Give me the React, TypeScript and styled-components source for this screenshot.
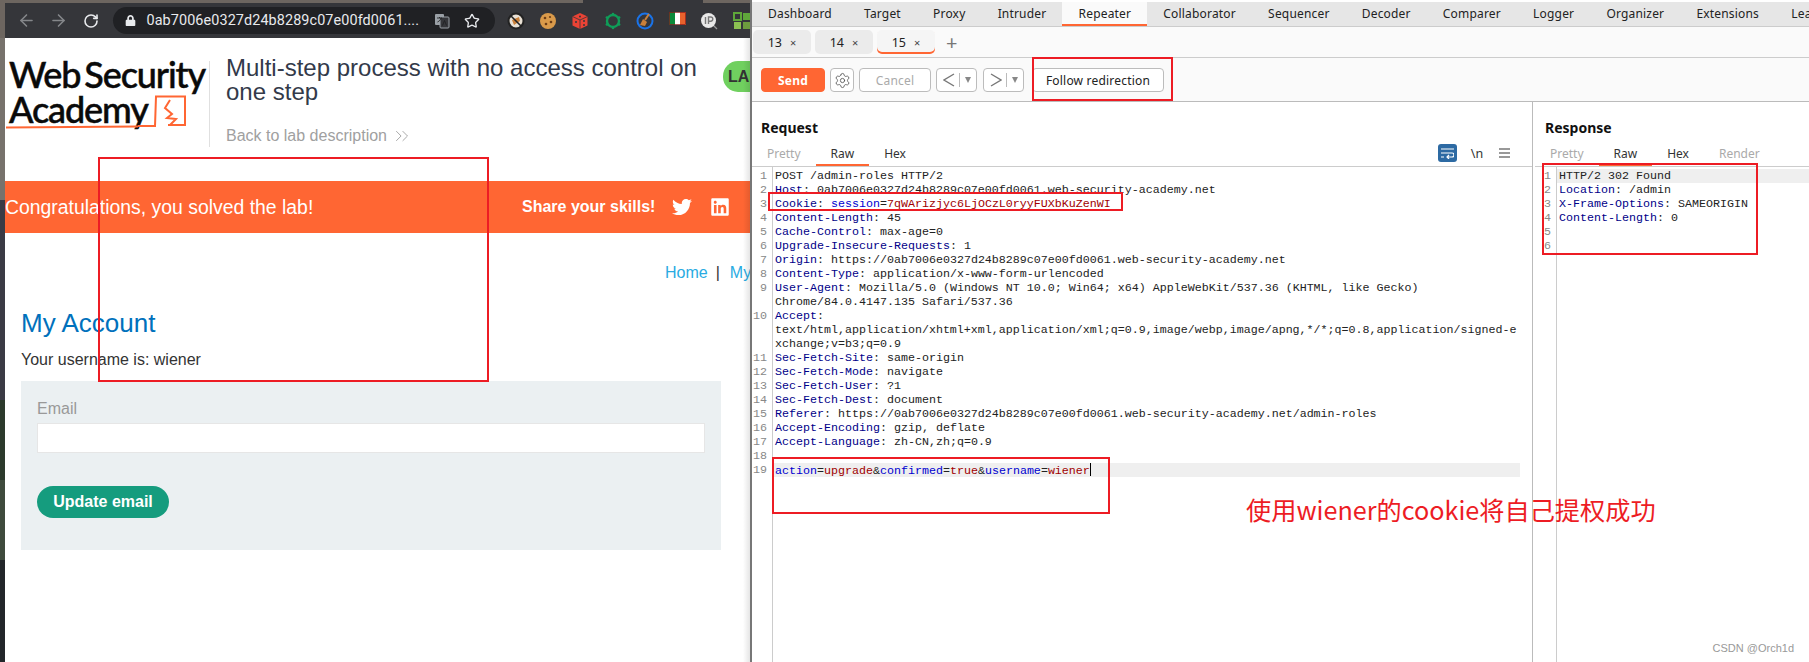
import React from 'react';
import styled, { createGlobalStyle } from 'styled-components';
import { ArrowLeft, ArrowRight, RotateCw, Star, Settings, ChevronsRight } from 'lucide-react';
import { FaTwitter, FaLinkedin, FaLock } from 'react-icons/fa';

const Global = createGlobalStyle`
  html, body { margin: 0; padding: 0; background: #fff; }
  body { font-family: "Liberation Sans", Arial, sans-serif; }
  * { box-sizing: border-box; }
`;

const Screen = styled.div`
  position: relative;
  width: 1809px;
  height: 662px;
  display: flex;
  overflow: hidden;
  background: #fff;
`;
const Desktop = styled.div`
  width: 5px;
  flex: none;
  background: linear-gradient(#6d6660 0 38px, #77726c 38px 200px, #3b3b45 200px 400px, #2c3a2c 400px 480px, #3e4a3c 480px 560px, #22262a 560px);
`;
const BrowserPane = styled.div`
  width: 745px;
  flex: none;
  display: flex;
  flex-direction: column;
  overflow: hidden;
  position: relative;
  &::after {
    content: '';
    position: absolute;
    top: 38px;
    right: 0;
    bottom: 0;
    width: 7px;
    background: linear-gradient(to right, rgba(0,0,0,0), rgba(0,0,0,0.1));
  }
`;
const TabStrip = styled.div`
  height: 3px;
  flex: none;
  background: linear-gradient(to right, #6d6660 578px, #35363a 578px 698px, #6d6660 698px);
`;
const ChromeBar = styled.div`
  height: 35px;
  flex: none;
  background: #35363a;
  display: flex;
  align-items: center;
  padding-left: 5px;
`;
const NavButton = styled.div<{ $on?: boolean }>`
  width: 32.5px;
  flex: none;
  display: flex;
  justify-content: center;
  color: ${p => (p.$on ? '#e8eaed' : '#85878a')};
`;
const Omnibox = styled.div`
  width: 382px;
  height: 27px;
  flex: none;
  margin-left: 5px;
  border-radius: 14px;
  background: #202124;
  display: flex;
  align-items: center;
  padding-left: 12px;
  color: #e8eaed;
`;
const Url = styled.span`
  margin-left: 11px;
  width: 280px;
  flex: none;
  font: 14.4px "Roboto", "Liberation Sans", sans-serif;
  letter-spacing: 0.1px;
  white-space: nowrap;
`;
const OmniIcon = styled.div`
  width: 30px;
  flex: none;
  display: flex;
  justify-content: center;
`;
const Extensions = styled.div`
  display: flex;
  flex: none;
  margin-left: 5px;
`;
const Ext = styled.div`
  width: 32.3px;
  flex: none;
  display: flex;
  justify-content: center;
`;

const Header = styled.div`
  height: 143px;
  flex: none;
  display: flex;
  background: #fff;
`;
const LogoBox = styled.div`
  position: relative;
  width: 204px;
  flex: none;
  padding: 19px 0 0 4px;
  font: 500 36px/35px "Lato", "Liberation Sans", sans-serif;
  letter-spacing: -1.1px;
  word-spacing: -4px;
  -webkit-text-stroke: 0.5px #0a0a0a;
  color: #0a0a0a;
  white-space: nowrap;
`;
const LogoArt = styled.svg`
  position: absolute;
  left: 0;
  top: 0;
`;
const Divider = styled.div`
  width: 1px;
  height: 86px;
  margin-top: 23px;
  flex: none;
  background: #e0e0e0;
`;
const TitleBlock = styled.div`
  width: 497px;
  flex: none;
  margin-left: 16px;
  padding-top: 18px;
`;
const Title = styled.h2`
  margin: 0;
  font: 400 24px/24px "Liberation Sans", Arial, sans-serif;
  color: #333a4a;
`;
const BackLink = styled.div`
  margin-top: 21px;
  display: flex;
  align-items: center;
  gap: 4px;
  font-size: 16px;
  line-height: 20px;
  color: #a0a0a0;
`;
const LabBadge = styled.div`
  width: 80px;
  height: 31px;
  flex: none;
  margin-top: 23px;
  border-radius: 15px;
  background: #70d05f;
  padding-left: 5px;
  font: 700 16px/31px "Liberation Sans", sans-serif;
  color: #333;
`;
const Banner = styled.div`
  height: 52px;
  flex: none;
  display: flex;
  align-items: center;
  background: #ff6633;
  color: #fff;
`;
const Solved = styled.div`
  width: 517px;
  flex: none;
  font-size: 19.4px;
  padding-top: 1px;
`;
const ShareText = styled.div`
  width: 141px;
  flex: none;
  font-weight: 700;
  font-size: 16px;
`;
const SocialIcon = styled.div`
  width: 38px;
  flex: none;
  display: flex;
  justify-content: center;
`;
const PageBody = styled.div`
  padding: 30px 0 0 16px;
`;
const TopLinks = styled.div`
  margin-left: 644px;
  font-size: 16px;
  line-height: 20px;
  color: #29abe2;
  white-space: nowrap;
  span { color: #333; margin: 0 10px 0 8px; }
`;
const AccountTitle = styled.h1`
  margin: 25px 0 12px;
  font: 400 26px/30px "Liberation Sans", sans-serif;
  color: #0071bc;
`;
const Username = styled.p`
  margin: 0 0 11px;
  font-size: 16px;
  line-height: 20px;
  color: #333;
`;
const FormPanel = styled.div`
  width: 700px;
  height: 169px;
  padding: 18px 16px 0;
  background: #ebf0f2;
`;
const Label = styled.div`
  font-size: 16px;
  line-height: 20px;
  margin-bottom: 4px;
  color: #999;
`;
const EmailInput = styled.div`
  height: 30px;
  background: #fff;
  border: 1px solid #e6e6e6;
`;
const UpdateButton = styled.div`
  width: 132px;
  height: 32px;
  margin-top: 33px;
  border-radius: 16px;
  background: #159c7e;
  color: #fff;
  font-weight: 700;
  font-size: 16px;
  line-height: 31px;
  text-align: center;
`;

const BurpPane = styled.div`
  width: 1059px;
  flex: none;
  display: flex;
  flex-direction: column;
  border-left: 2px solid #777;
  background: #fff;
  font-family: "Noto Sans", "Open Sans", sans-serif;
`;
const MainTabs = styled.div`
  margin-top: 2px;
  height: 25px;
  flex: none;
  display: flex;
  background: #e6e6e6;
  border-bottom: 1px solid #ccc;
  white-space: nowrap;
`;
const MainTab = styled.div<{ $active?: boolean }>`
  padding: 0 16.1px;
  flex: none;
  height: 24px;
  font-size: 12px;
  line-height: 23px;
  letter-spacing: 0.18px;
  color: #222;
  background: ${p => (p.$active ? '#fafafa' : 'transparent')};
  border-bottom: 2px solid ${p => (p.$active ? '#ff6633' : 'transparent')};
`;
const SubTabs = styled.div`
  height: 31px;
  flex: none;
  display: flex;
  align-items: center;
  gap: 4px;
  padding-left: 1px;
  background: #fafafa;
  border-bottom: 1px solid #ccc;
`;
const SubTab = styled.div<{ $active?: boolean }>`
  position: relative;
  width: 58px;
  height: 24px;
  border-radius: 5px;
  background: ${p => (p.$active ? '#f5f5f5' : '#ebebeb')};
  display: flex;
  align-items: center;
  justify-content: center;
  gap: 8px;
  font-size: 12.5px;
  color: #222;
  box-shadow: ${p => (p.$active ? 'inset 0 -2px 0 #ff6633' : 'none')};
  small { font-size: 11px; color: #444; }
`;
const AddTab = styled.div`
  margin-left: 7px;
  font-size: 20px;
  font-weight: 400;
  color: #777;
`;
const Toolbar = styled.div`
  height: 44px;
  flex: none;
  display: flex;
  align-items: center;
  padding: 1px 0 0 9px;
  background: #fafafa;
  border-bottom: 1px solid #bbb;
`;
const ToolButton = styled.div<{ $w: number; $kind?: 'send' | 'muted'; $gap?: number }>`
  width: ${p => p.$w}px;
  height: 24px;
  flex: none;
  margin-left: ${p => p.$gap ?? 5}px;
  border-radius: 4px;
  border: 1px solid ${p => (p.$kind === 'send' ? '#ff6633' : '#bcbcbc')};
  background: ${p => (p.$kind === 'send' ? '#ff6633' : '#fff')};
  color: ${p => (p.$kind === 'send' ? '#fff' : p.$kind === 'muted' ? '#aaa' : '#222')};
  font-size: 12px;
  font-weight: ${p => (p.$kind === 'send' ? 700 : 400)};
  letter-spacing: 0.2px;
  display: flex;
  align-items: center;
  justify-content: center;
`;
const SplitSep = styled.i`
  width: 1px;
  height: 14px;
  margin: 0 5px 0 4px;
  background: #bbb;
`;
const Caret = styled.span`
  width: 0;
  height: 0;
  border-left: 3px solid transparent;
  border-right: 3px solid transparent;
  border-top: 6px solid #888;
`;
const Editors = styled.div`
  flex: 1;
  display: flex;
  min-height: 0;
`;
const RequestPane = styled.div`
  width: 781px;
  flex: none;
  display: flex;
  flex-direction: column;
  border-right: 1px solid #bbb;
`;
const ResponsePane = styled.div`
  flex: 1;
  min-width: 0;
  display: flex;
  flex-direction: column;
  padding-left: 2px;
`;
const PaneTitle = styled.h3<{ $left: number }>`
  margin: 0;
  padding: 17px 0 5px ${p => p.$left}px;
  font-size: 14px;
  line-height: 18px;
  font-weight: 700;
  color: #111;
`;
const ViewTabs = styled.div`
  height: 25px;
  flex: none;
  display: flex;
  border-bottom: 1px solid #ccc;
  padding-right: 22px;
`;
const ViewTab = styled.div<{ $active?: boolean; $dim?: boolean }>`
  padding: 0 15px;
  height: 24px;
  font-size: 12px;
  line-height: 24px;
  color: ${p => (p.$dim ? '#aaa' : '#333')};
  border-bottom: 2px solid ${p => (p.$active ? '#ff6633' : 'transparent')};
`;
const ViewTools = styled.div`
  margin-left: auto;
  display: flex;
  align-items: center;
  height: 22px;
  gap: 12px;
`;
const WrapIcon = styled.div`
  width: 19px;
  height: 18px;
  border-radius: 3px;
  background: #2d6aa3;
  display: flex;
  align-items: center;
  justify-content: center;
`;
const NewlineToggle = styled.span`
  font-size: 12.5px;
  color: #333;
  width: 16px;
  text-align: center;
`;
const MenuIcon = styled.svg`
  display: block;
  margin-left: 2px;
`;
const CodeArea = styled.div`
  flex: 1;
  display: flex;
  padding-top: 0;
  font: 11.67px/14px "Liberation Mono", "Courier New", monospace;
  white-space: pre;
  overflow: hidden;
`;
const Gutter = styled.div<{ $w: number }>`
  width: ${p => p.$w}px;
  flex: none;
  padding: 2px 5px 0 0;
  text-align: right;
  border-right: 1px solid #ccc;
  color: #888;
`;
const GutterNum = styled.div`
  height: 14px;
`;
const Lines = styled.div<{ $w?: number }>`
  padding-top: 2px;
  width: ${p => (p.$w ? `${p.$w}px` : '100%')};
`;
const Line = styled.div<{ $active?: boolean }>`
  height: 14px;
  padding-left: 2px;
  color: #222;
  background: ${p => (p.$active ? '#efefef' : 'transparent')};
`;
const Name = styled.span`color: #000088;`;
const Param = styled.span`color: #0000d0;`;
const Val = styled.span`color: #a00000;`;
const Cursor = styled.span`
  display: inline-block;
  width: 1px;
  height: 13px;
  vertical-align: -2px;
  background: #000;
`;

const RedBox = styled.div<{ $x: number; $y: number; $w: number; $h: number }>`
  position: absolute;
  left: ${p => p.$x}px;
  top: ${p => p.$y}px;
  width: ${p => p.$w}px;
  height: ${p => p.$h}px;
  border: 2px solid #ed1c24;
  pointer-events: none;
`;
const Note = styled.div`
  position: absolute;
  left: 1246px;
  top: 492px;
  font: 400 25.2px/34px "Noto Sans CJK SC", "Noto Sans", sans-serif;
  color: #ed1c24;
  white-space: nowrap;
`;
const Watermark = styled.div`
  position: absolute;
  right: 15px;
  top: 641px;
  font: 11px/14px "Liberation Sans", sans-serif;
  color: #999;
`;

const hdr = (n: string, v: string) => (
  <>
    <Name>{n}</Name>: {v}
  </>
);

const reqRows: { n?: number; c: React.ReactNode; active?: boolean }[] = [
  { n: 1, c: 'POST /admin-roles HTTP/2' },
  { n: 2, c: hdr('Host', '0ab7006e0327d24b8289c07e00fd0061.web-security-academy.net') },
  { n: 3, c: <><Name>Cookie</Name>: <Param>session</Param>=<Val>7qWArizjyc6LjOCzL0ryyFUXbKuZenWI</Val></> },
  { n: 4, c: hdr('Content-Length', '45') },
  { n: 5, c: hdr('Cache-Control', 'max-age=0') },
  { n: 6, c: hdr('Upgrade-Insecure-Requests', '1') },
  { n: 7, c: hdr('Origin', 'https://0ab7006e0327d24b8289c07e00fd0061.web-security-academy.net') },
  { n: 8, c: hdr('Content-Type', 'application/x-www-form-urlencoded') },
  { n: 9, c: hdr('User-Agent', 'Mozilla/5.0 (Windows NT 10.0; Win64; x64) AppleWebKit/537.36 (KHTML, like Gecko)') },
  { c: 'Chrome/84.0.4147.135 Safari/537.36' },
  { n: 10, c: <><Name>Accept</Name>:</> },
  { c: 'text/html,application/xhtml+xml,application/xml;q=0.9,image/webp,image/apng,*/*;q=0.8,application/signed-e' },
  { c: 'xchange;v=b3;q=0.9' },
  { n: 11, c: hdr('Sec-Fetch-Site', 'same-origin') },
  { n: 12, c: hdr('Sec-Fetch-Mode', 'navigate') },
  { n: 13, c: hdr('Sec-Fetch-User', '?1') },
  { n: 14, c: hdr('Sec-Fetch-Dest', 'document') },
  { n: 15, c: hdr('Referer', 'https://0ab7006e0327d24b8289c07e00fd0061.web-security-academy.net/admin-roles') },
  { n: 16, c: hdr('Accept-Encoding', 'gzip, deflate') },
  { n: 17, c: hdr('Accept-Language', 'zh-CN,zh;q=0.9') },
  { n: 18, c: '' },
  {
    n: 19,
    active: true,
    c: (
      <>
        <Param>action</Param>=<Val>upgrade</Val>&amp;<Param>confirmed</Param>=<Val>true</Val>&amp;
        <Param>username</Param>=<Val>wiener</Val>
        <Cursor />
      </>
    ),
  },
];

const resRows: { n: number; c: React.ReactNode; active?: boolean }[] = [
  { n: 1, c: 'HTTP/2 302 Found', active: true },
  { n: 2, c: hdr('Location', '/admin') },
  { n: 3, c: hdr('X-Frame-Options', 'SAMEORIGIN') },
  { n: 4, c: hdr('Content-Length', '0') },
  { n: 5, c: '' },
  { n: 6, c: '' },
];

const tabs = ['Dashboard', 'Target', 'Proxy', 'Intruder', 'Repeater', 'Collaborator', 'Sequencer', 'Decoder', 'Comparer', 'Logger', 'Organizer', 'Extensions', 'Learn'];

const extIcons: React.ReactNode[] = [
  <svg width="18" height="18" viewBox="0 0 18 18" key="a">
    <circle cx="9" cy="9" r="7.5" fill="#e8e0d4" stroke="#222" strokeWidth="2" />
    <path d="M5 8l7-3 1 4-6 4z" fill="#c9803a" />
    <path d="M4 4l10 10" stroke="#222" strokeWidth="1.6" />
  </svg>,
  <svg width="18" height="18" viewBox="0 0 18 18" key="b">
    <circle cx="9" cy="9" r="8" fill="#d99a4a" />
    <circle cx="6" cy="6" r="1.3" fill="#6b3d16" />
    <circle cx="11" cy="5" r="1.1" fill="#6b3d16" />
    <circle cx="12" cy="10" r="1.3" fill="#6b3d16" />
    <circle cx="7" cy="12" r="1.3" fill="#6b3d16" />
  </svg>,
  <svg width="18" height="18" viewBox="0 0 18 18" key="c">
    <path d="M9 1l7.5 3.5v9L9 17l-7.5-3.5v-9z" fill="#ea4335" />
    <path d="M9 8v9M1.5 4.5L9 8l7.5-3.5" stroke="#35363a" strokeWidth="0.8" fill="none" />
    <circle cx="9" cy="4.5" r="1" fill="#35363a" />
    <circle cx="5" cy="10" r="1" fill="#35363a" />
    <circle cx="13" cy="9" r="1" fill="#35363a" />
    <circle cx="13" cy="13" r="1" fill="#35363a" />
  </svg>,
  <svg width="18" height="18" viewBox="0 0 18 18" key="d">
    <circle cx="9" cy="9" r="6" fill="none" stroke="#0f9d58" strokeWidth="2.4" />
    <circle cx="9" cy="2" r="1.3" fill="#0f9d58" />
    <circle cx="9" cy="16" r="1.3" fill="#0f9d58" />
    <circle cx="2.9" cy="5.5" r="1.3" fill="#0f9d58" />
    <circle cx="15.1" cy="5.5" r="1.3" fill="#0f9d58" />
    <circle cx="2.9" cy="12.5" r="1.3" fill="#0f9d58" />
    <circle cx="15.1" cy="12.5" r="1.3" fill="#0f9d58" />
  </svg>,
  <svg width="18" height="18" viewBox="0 0 18 18" key="e">
    <circle cx="9" cy="9" r="7.5" fill="none" stroke="#1a73e8" strokeWidth="2" />
    <path d="M4 13l3-6 4 3-2 4z" fill="#c9803a" />
    <path d="M9 8l4-6" stroke="#c9803a" strokeWidth="2" />
  </svg>,
  <svg width="17" height="13" viewBox="0 0 17 13" key="f">
    <rect width="17" height="13" fill="#fff" />
    <rect width="6" height="13" fill="#0a8a3a" />
    <rect x="11" width="6" height="13" fill="#e8622c" />
    <rect x="0.5" y="0.5" width="16" height="12" fill="none" stroke="#8a1a1a" strokeWidth="0.7" />
  </svg>,
  <svg width="18" height="18" viewBox="0 0 18 18" key="g">
    <path d="M13 13l4 4" stroke="#999" strokeWidth="1.2" />
    <circle cx="8.5" cy="8.5" r="7.5" fill="#e8e8e8" />
    <path d="M5.5 5v7M8.5 12V5h2.2a2 2 0 0 1 0 4.2H8.5" stroke="#777" strokeWidth="1.4" fill="none" />
  </svg>,
  <svg width="18" height="18" viewBox="0 0 18 18" key="h">
    <rect x="1" y="1" width="7" height="7" fill="none" stroke="#5fa83a" strokeWidth="2" />
    <rect x="10" y="1" width="7" height="7" fill="#5fa83a" />
    <rect x="1" y="10" width="7" height="7" fill="#8cc152" />
    <rect x="10" y="10" width="7" height="7" fill="#6d9c3e" />
  </svg>,
];

export default function App() {
  return (
    <Screen>
      <Global />
      <Desktop />
      <BrowserPane>
        <TabStrip />
        <ChromeBar>
          <NavButton><ArrowLeft size={19} /></NavButton>
          <NavButton><ArrowRight size={19} /></NavButton>
          <NavButton $on><RotateCw size={16} strokeWidth={2.4} /></NavButton>
          <Omnibox>
            <FaLock size={11} />
            <Url>0ab7006e0327d24b8289c07e00fd0061....</Url>
            <OmniIcon>
              <svg width="16" height="16" viewBox="0 0 16 16">
                <rect x="1" y="1" width="9" height="11" rx="1" fill="#9aa0a6" />
                <rect x="6" y="4" width="9" height="11" rx="1" fill="#35363a" stroke="#9aa0a6" />
                <path d="M3 5h5M5.500 4v1M3.500 9c2-1 3-2 3.500-4M8.500 12.500l2-5 2 5" stroke="#202124" strokeWidth="0.9" fill="none" />
              </svg>
            </OmniIcon>
            <OmniIcon><Star size={16} /></OmniIcon>
          </Omnibox>
          <Extensions>
            {extIcons.map((icon, i) => <Ext key={i}>{icon}</Ext>)}
          </Extensions>
        </ChromeBar>
        <Header>
          <LogoBox>
            Web Security<br />Academy
            <LogoArt width="204" height="109" viewBox="5 38 204 109">
              <path d="M6 127.500 L138 126.500 M138 126 H155 L156 96.500 H185 V125 H168" fill="none" stroke="#ff6633" strokeWidth="2" />
              <path d="M170 100 L165 108 L172 114 L167 118 L176 119 L170 125" fill="none" stroke="#ff6633" strokeWidth="2" />
            </LogoArt>
          </LogoBox>
          <Divider />
          <TitleBlock>
            <Title>Multi-step process with no access control on one step</Title>
            <BackLink>Back to lab description <ChevronsRight size={22} strokeWidth={1} /></BackLink>
          </TitleBlock>
          <LabBadge>LAB</LabBadge>
        </Header>
        <Banner>
          <Solved>Congratulations, you solved the lab!</Solved>
          <ShareText>Share your skills!</ShareText>
          <SocialIcon><FaTwitter size={20} /></SocialIcon>
          <SocialIcon><FaLinkedin size={20} /></SocialIcon>
        </Banner>
        <PageBody>
          <TopLinks>Home<span>|</span>My account</TopLinks>
          <AccountTitle>My Account</AccountTitle>
          <Username>Your username is: wiener</Username>
          <FormPanel>
            <Label>Email</Label>
            <EmailInput />
            <UpdateButton>Update email</UpdateButton>
          </FormPanel>
        </PageBody>
      </BrowserPane>
      <BurpPane>
        <MainTabs>
          {tabs.map(t => <MainTab key={t} $active={t === 'Repeater'}>{t}</MainTab>)}
        </MainTabs>
        <SubTabs>
          <SubTab>13 <small>×</small></SubTab>
          <SubTab>14 <small>×</small></SubTab>
          <SubTab $active>15 <small>×</small></SubTab>
          <AddTab>+</AddTab>
        </SubTabs>
        <Toolbar>
          <ToolButton $w={64} $kind="send" $gap={0}>Send</ToolButton>
          <ToolButton $w={24}><Settings size={17} strokeWidth={1.2} color="#555" /></ToolButton>
          <ToolButton $w={72} $kind="muted">Cancel</ToolButton>
          <ToolButton $w={41}>
            <svg width="12" height="14" viewBox="0 0 12 14"><path d="M11 1L1 7l10 6" fill="none" stroke="#777" strokeWidth="1.4" /></svg>
            <SplitSep /><Caret />
          </ToolButton>
          <ToolButton $w={41} $gap={6}>
            <svg width="12" height="14" viewBox="0 0 12 14"><path d="M1 1l10 6-10 6" fill="none" stroke="#777" strokeWidth="1.4" /></svg>
            <SplitSep /><Caret />
          </ToolButton>
          <ToolButton $w={132} $gap={8}>Follow redirection</ToolButton>
        </Toolbar>
        <Editors>
          <RequestPane>
            <PaneTitle $left={9}>Request</PaneTitle>
            <ViewTabs>
              <ViewTab $dim>Pretty</ViewTab>
              <ViewTab $active>Raw</ViewTab>
              <ViewTab>Hex</ViewTab>
              <ViewTools>
                <WrapIcon>
                  <svg width="13" height="11" viewBox="0 0 13 11">
                    <path d="M0 1h13M0 5h11a2 2 0 0 1 0 4H6M8 7L6 9l2 2M0 9h3" fill="none" stroke="#fff" strokeWidth="1.2" />
                  </svg>
                </WrapIcon>
                <NewlineToggle>\n</NewlineToggle>
                <MenuIcon width="11" height="10" viewBox="0 0 11 10">
                  <path d="M0 1h11M0 5h11M0 9h11" stroke="#333" strokeWidth="1.2" />
                </MenuIcon>
              </ViewTools>
            </ViewTabs>
            <CodeArea>
              <Gutter $w={21}>
                {reqRows.map((r, i) => <GutterNum key={i}>{r.n ?? ''}</GutterNum>)}
              </Gutter>
              <Lines $w={747}>
                {reqRows.map((r, i) => <Line key={i} $active={r.active}>{r.c}</Line>)}
              </Lines>
            </CodeArea>
          </RequestPane>
          <ResponsePane>
            <PaneTitle $left={10}>Response</PaneTitle>
            <ViewTabs>
              <ViewTab $dim>Pretty</ViewTab>
              <ViewTab $active>Raw</ViewTab>
              <ViewTab>Hex</ViewTab>
              <ViewTab $dim>Render</ViewTab>
            </ViewTabs>
            <CodeArea>
              <Gutter $w={22}>
                {resRows.map(r => <GutterNum key={r.n}>{r.n}</GutterNum>)}
              </Gutter>
              <Lines>
                {resRows.map(r => <Line key={r.n} $active={r.active}>{r.c}</Line>)}
              </Lines>
            </CodeArea>
          </ResponsePane>
        </Editors>
      </BurpPane>
      <RedBox $x={98} $y={157} $w={391} $h={225} />
      <RedBox $x={1032} $y={57} $w={141} $h={44} />
      <RedBox $x={768} $y={192} $w={355} $h={19} />
      <RedBox $x={772} $y={457} $w={338} $h={57} />
      <RedBox $x={1542} $y={163} $w={216} $h={92} />
      <Note>使用wiener的cookie将自己提权成功</Note>
      <Watermark>CSDN @Orch1d</Watermark>
    </Screen>
  );
}
